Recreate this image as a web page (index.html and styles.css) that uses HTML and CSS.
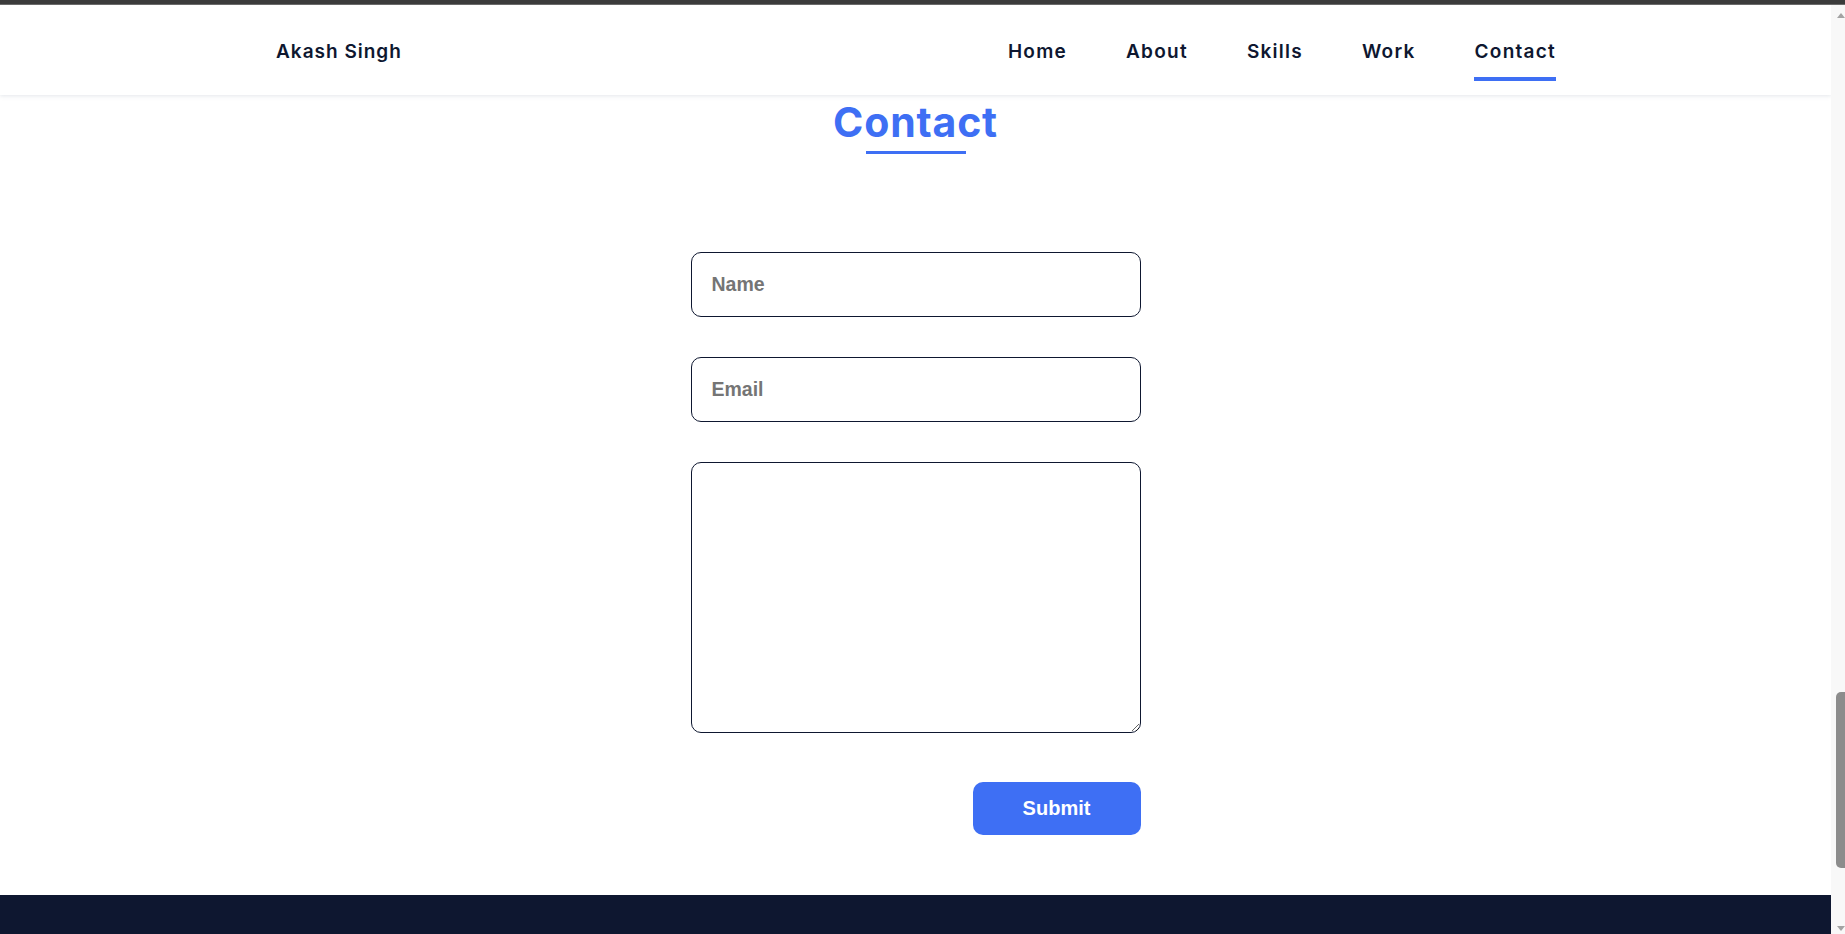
FILE: index.html
```html
<!DOCTYPE html>
<html lang="en">
<head>
<meta charset="utf-8">
<title>Akash Singh - Contact</title>
<link rel="stylesheet" href="styles.css">
</head>
<body>
<div class="topbar"></div>
<div class="window">
  <div class="page">
    <header class="header">
      <nav class="nav">
        <a class="nav__logo" href="#">Akash Singh</a>
        <ul class="nav__list">
          <li><a class="nav__link" href="#home">Home</a></li>
          <li><a class="nav__link" href="#about">About</a></li>
          <li><a class="nav__link" href="#skills">Skills</a></li>
          <li><a class="nav__link" href="#work">Work</a></li>
          <li><a class="nav__link nav__link--active" href="#contact">Contact</a></li>
        </ul>
      </nav>
    </header>
    <main class="contact">
      <h2 class="section-title">Contact</h2>
      <form class="contact__form" action="">
        <input class="contact__input" type="text" placeholder="Name">
        <input class="contact__input" type="email" placeholder="Email">
        <textarea class="contact__input contact__textarea"></textarea>
        <button class="contact__button" type="button">Submit</button>
      </form>
    </main>
    <footer class="footer"></footer>
  </div>
  <div class="scrollbar">
    <span class="scrollbar__arrow scrollbar__arrow--up"></span>
    <div class="scrollbar__thumb"></div>
    <span class="scrollbar__arrow scrollbar__arrow--down"></span>
  </div>
</div>
</body>
</html>
```
FILE: styles.css
```css
html, body {
  margin: 0;
  padding: 0;
}
body {
  height: 934px;
  overflow: hidden;
  background: #ffffff;
  font-family: Inter, "Open Sans", sans-serif;
  color: #0e1730;
}
.topbar {
  height: 4px;
  background: #3b3b3b;
  border-bottom: 1px solid #6a6a6a;
}
.window {
  display: flex;
  height: 929px;
}
.page {
  flex: 1;
  display: flex;
  flex-direction: column;
  overflow: hidden;
  background: #ffffff;
}
.header {
  height: 90px;
  flex: none;
  background: #ffffff;
  box-shadow: 0 1px 4px rgba(146, 161, 176, 0.25);
  position: relative;
  z-index: 1;
}
.nav {
  box-sizing: border-box;
  width: 1281px;
  height: 100%;
  margin: 0 auto;
  padding-top: 3px;
  display: flex;
  justify-content: space-between;
  align-items: center;
}
.nav__logo {
  color: #0e1730;
  text-decoration: none;
  font-weight: 600;
  font-size: 19px;
  letter-spacing: 1px;
  line-height: 24px;
  margin-left: 1px;
}
.nav__list {
  display: flex;
  gap: 59px;
  list-style: none;
  margin: 0;
  padding: 0;
}
.nav__link {
  display: block;
  position: relative;
  color: #0e1730;
  text-decoration: none;
  font-weight: 600;
  font-size: 19px;
  letter-spacing: 1.25px;
  line-height: 24px;
}
.nav__link--active::after {
  content: "";
  position: absolute;
  left: -1px;
  right: 0;
  top: 37.5px;
  height: 4px;
  background: #3e6ff4;
}
.contact {
  flex: none;
}
.section-title {
  margin: 3px 0 0;
  text-align: center;
  color: #3e6ff4;
  font-weight: 700;
  font-size: 41px;
  line-height: 48px;
  letter-spacing: 0.8px;
}
.section-title::after {
  content: "";
  display: block;
  width: 100px;
  height: 3px;
  margin: 5px auto 0;
  background: #3e6ff4;
}
.contact__form {
  width: 450px;
  margin: 98px auto 0;
}
.contact__input {
  display: block;
  box-sizing: border-box;
  width: 100%;
  height: 65px;
  margin: 0 0 40px;
  padding: 0 20px;
  border: 1.5px solid #0e1730;
  border-radius: 10px;
  outline: none;
  background: #ffffff;
  font-family: "Liberation Sans", Arial, sans-serif;
  font-weight: 700;
  font-size: 19.5px;
  color: #0e1730;
}
.contact__input::placeholder {
  color: #757575;
}
.contact__textarea {
  height: 271px;
  margin-bottom: 49px;
  padding: 20px;
}
.contact__button {
  display: block;
  width: 168px;
  height: 53px;
  margin-left: auto;
  padding: 0;
  border: none;
  outline: none;
  border-radius: 10px;
  background: #3e6ff4;
  color: #ffffff;
  font-family: "Liberation Sans", Arial, sans-serif;
  font-weight: 700;
  font-size: 20px;
  cursor: pointer;
}
.footer {
  flex: 1;
  margin-top: 60px;
  background: #0e1730;
}
.scrollbar {
  width: 14px;
  flex: none;
  background: #f8f8f8;
  display: flex;
  flex-direction: column;
  align-items: flex-end;
}
.scrollbar__arrow {
  display: block;
  width: 0;
  height: 0;
  border-left: 4.5px solid transparent;
  border-right: 4.5px solid transparent;
}
.scrollbar__arrow--up {
  margin-top: 8px;
  border-bottom: 5px solid #a3a3a3;
}
.scrollbar__arrow--down {
  margin-top: auto;
  margin-bottom: 3px;
  border-top: 5px solid #a3a3a3;
}
.scrollbar__thumb {
  width: 9px;
  height: 176px;
  margin-top: 674px;
  background: #8c8c8c;
  border-radius: 5px 0 0 5px;
}
```
